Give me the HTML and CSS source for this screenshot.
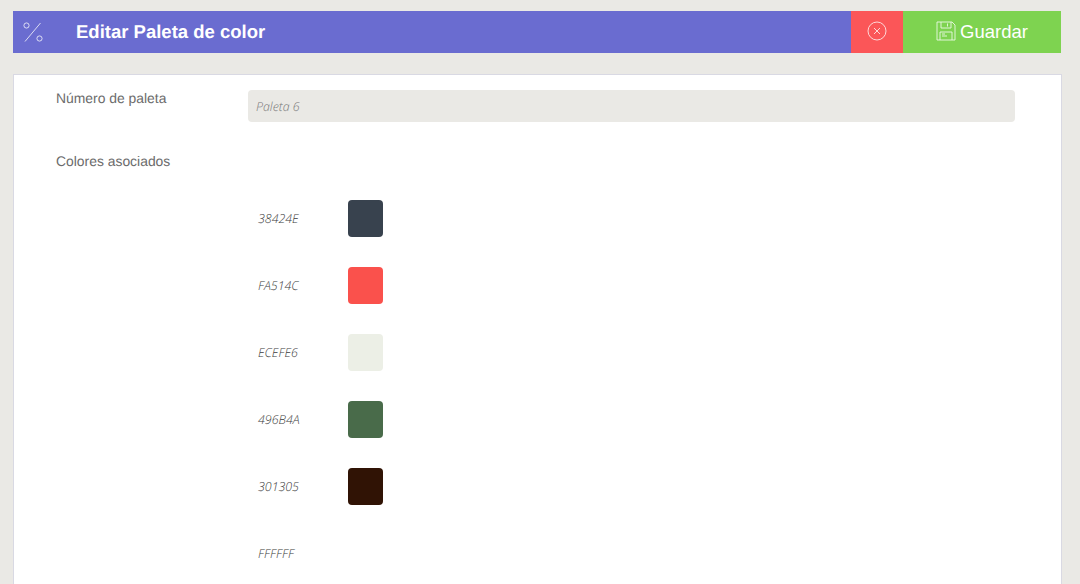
FILE: index.html
```html
<!DOCTYPE html>
<html lang="es">
<head>
<meta charset="utf-8">
<title>Editar Paleta de color</title>
<link rel="stylesheet" href="styles.css">
</head>
<body>
<header class="topbar">
  <div class="topbar-icon">
    <svg width="22" height="22" viewBox="0 0 22 22" fill="none" stroke="#fff" stroke-width="0.9" opacity="0.85"><circle cx="4.500" cy="4.500" r="2.600"/><circle cx="17.500" cy="17.500" r="2.600"/><path d="M18.500 2 3 20.500"/></svg>
  </div>
  <h1 class="topbar-title">Editar Paleta de color</h1>
  <button class="btn btn-cancel" type="button" aria-label="Cancelar">
    <svg class="btn-icon" width="20" height="20" viewBox="0 0 20 20" fill="none" stroke="#fff" stroke-width="0.9" opacity="0.85"><circle cx="10" cy="10" r="9"/><path d="M7 7l6 6M13 7l-6 6"/></svg>
  </button>
  <button class="btn btn-save" type="button">
    <svg class="btn-icon" width="20" height="20" viewBox="0 0 20 20" fill="none" stroke="#fff" stroke-width="0.9" opacity="0.85"><path d="M1 1h15l3 3v15H1z"/><path d="M5 1v6h10V1M11.500 2.500v3"/><path d="M4 19v-8h12v8M6 13h3M6 15h5"/></svg>
    <span>Guardar</span>
  </button>
</header>
<main class="card">
  <div class="field">
    <span class="label label-number">Número de paleta</span>
    <div class="input">Paleta 6</div>
  </div>
  <div class="label label-colors">Colores asociados</div>
  <ul class="colors">
    <li class="color"><span class="code">38424E</span><span class="swatch s1"></span></li>
    <li class="color"><span class="code">FA514C</span><span class="swatch s2"></span></li>
    <li class="color"><span class="code">ECEFE6</span><span class="swatch s3"></span></li>
    <li class="color"><span class="code">496B4A</span><span class="swatch s4"></span></li>
    <li class="color"><span class="code">301305</span><span class="swatch s5"></span></li>
    <li class="color"><span class="code">FFFFFF</span><span class="swatch s6"></span></li>
  </ul>
</main>
</body>
</html>
```
FILE: styles.css
```css
* { box-sizing: border-box; }
html, body { height: 100%; }
body {
  margin: 0;
  padding: 11px 18px 0 13px;
  background: #eae9e5;
  font-family: "Liberation Sans", Arial, sans-serif;
  text-rendering: geometricPrecision;
  overflow: hidden;
}
.topbar {
  display: flex;
  align-items: stretch;
  width: 1048px;
  height: 42px;
  background: #6a6cd0;
  color: #fff;
}
.topbar-icon {
  width: 63px;
  padding-left: 9px;
  display: flex;
  align-items: center;
}
.topbar-title {
  flex: 1;
  margin: 0;
  font-size: 18.500px;
  font-weight: 700;
  line-height: 41px;
}
.btn {
  border: 0;
  padding: 0;
  color: #fff;
  font: inherit;
  display: flex;
  align-items: center;
  justify-content: center;
}
.btn-icon { margin-top: -2px; }
.btn-cancel { width: 52px; background: #fb5658; }
.btn-save {
  width: 158px;
  gap: 4px;
  background: #7ed350;
  font-size: 18.500px;
  font-weight: 400;
}
.card {
  margin-top: 21px;
  height: 530px;
  padding: 15px 46px 0 42px;
  background: #fff;
  border: 1px solid #d9d9e3;
}
.field { display: flex; align-items: flex-start; }
.label {
  width: 192px;
  color: #6b6b6b;
  font-size: 13.900px;
  line-height: 18px;
}
.label-number { margin-top: -1px; }
.input {
  flex: 1;
  height: 32px;
  padding: 1px 0 0 8px;
  background: #eae9e5;
  border-radius: 4px;
  color: #777;
  font-family: "Open Sans", sans-serif;
  font-size: 12.400px;
  font-style: italic;
  font-weight: 300;
  line-height: 31px;
}
.label-colors { margin-top: 30px; }
.colors {
  list-style: none;
  margin: 30px 0 0;
  padding: 0 0 0 202px;
}
.color {
  display: flex;
  align-items: center;
  height: 37px;
  margin-bottom: 30px;
}
.code {
  width: 90px;
  color: #3c3c3c;
  font-family: "Open Sans", sans-serif;
  font-size: 12.400px;
  font-style: italic;
  font-weight: 300;
}
.swatch {
  width: 35px;
  height: 37px;
  border-radius: 4px;
}
.s1 { background: #38424e; }
.s2 { background: #fa514c; }
.s3 { background: #ecefe6; }
.s4 { background: #496b4a; }
.s5 { background: #301305; }
.s6 { background: #fff; }
```
